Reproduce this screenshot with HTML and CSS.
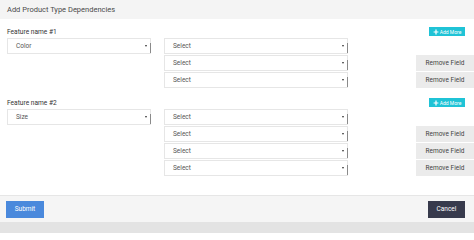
FILE: index.html
```html
<!DOCTYPE html>
<html>
<head>
<meta charset="utf-8">
<link rel="stylesheet" href="styles.css">
</head>
<body>
<div class="page">
  <div class="header">Add Product Type Dependencies</div>
  <div class="content">
    <div class="group">
      <div class="top">
        <span class="label">Feature name #1</span>
        <span class="add"><svg class="plus" viewBox="0 0 10 10"><path d="M4 1h2v3h3v2H6v3H4V6H1V4h3z" fill="#fff"/></svg>Add More</span>
      </div>
      <div class="rows">
        <div class="row">
          <div class="sel feat">Color<i class="arr"></i></div>
          <div class="sel val">Select<i class="arr"></i></div>
          <div class="slot"></div>
        </div>
        <div class="row">
          <div class="blank"></div>
          <div class="sel val">Select<i class="arr"></i></div>
          <div class="slot"><span class="remove">Remove Field</span></div>
        </div>
        <div class="row">
          <div class="blank"></div>
          <div class="sel val">Select<i class="arr"></i></div>
          <div class="slot"><span class="remove">Remove Field</span></div>
        </div>
      </div>
    </div>
    <div class="group">
      <div class="top">
        <span class="label">Feature name #2</span>
        <span class="add"><svg class="plus" viewBox="0 0 10 10"><path d="M4 1h2v3h3v2H6v3H4V6H1V4h3z" fill="#fff"/></svg>Add More</span>
      </div>
      <div class="rows">
        <div class="row">
          <div class="sel feat">Size<i class="arr"></i></div>
          <div class="sel val">Select<i class="arr"></i></div>
          <div class="slot"></div>
        </div>
        <div class="row">
          <div class="blank"></div>
          <div class="sel val">Select<i class="arr"></i></div>
          <div class="slot"><span class="remove">Remove Field</span></div>
        </div>
        <div class="row">
          <div class="blank"></div>
          <div class="sel val">Select<i class="arr"></i></div>
          <div class="slot"><span class="remove">Remove Field</span></div>
        </div>
        <div class="row">
          <div class="blank"></div>
          <div class="sel val">Select<i class="arr"></i></div>
          <div class="slot"><span class="remove">Remove Field</span></div>
        </div>
      </div>
    </div>
  </div>
  <div class="footer">
    <span class="btn submit">Submit</span>
    <span class="btn cancel">Cancel</span>
  </div>
  <div class="strip"></div>
</div>
</body>
</html>
```

FILE: styles.css
```css
* { box-sizing: border-box; }
html, body { margin: 0; padding: 0; background: #fff; }
.page {
  width: 474px;
  height: 233px;
  overflow: hidden;
  font-family: Roboto, "Liberation Sans", sans-serif;
  color: #444;
  display: flex;
  flex-direction: column;
}
.header {
  height: 19px;
  background: #f4f4f4;
  font-size: 7.5px;
  line-height: 19px;
  padding-left: 7px;
  color: #4a4a4a;
}
.content {
  padding: 8px 0 0 7px;
  display: flex;
  flex-direction: column;
  gap: 10px;
  flex: 1;
}
.top {
  height: 9px;
  display: flex;
  align-items: center;
  justify-content: space-between;
  padding-right: 9px;
  margin-bottom: 2px;
}
.label {
  font-size: 6.6px;
  color: #333;
  margin-top: 1px;
}
.add {
  display: flex;
  align-items: center;
  justify-content: center;
  gap: 1px;
  width: 36px;
  height: 9px;
  background: #1fc3d6;
  color: #fff;
  font-size: 5px;
}
.plus { width: 6px; height: 6px; }
.rows {
  display: flex;
  flex-direction: column;
  gap: 1px;
}
.row {
  display: flex;
  height: 16px;
  align-items: stretch;
}
.sel {
  position: relative;
  background: #fff;
  border: 1px solid #e6e6e6;
  font-size: 6.5px;
  color: #555;
  padding-left: 8px;
  display: flex;
  align-items: center;
}
.feat, .blank { width: 144px; }
.val { width: 184px; margin-left: 13px; }
.arr {
  position: absolute;
  right: 3px;
  top: 6px;
  width: 0;
  height: 0;
  border-left: 1.5px solid transparent;
  border-right: 1.5px solid transparent;
  border-top: 2px solid #333;
}
.sel::after {
  content: "";
  position: absolute;
  right: -1px;
  top: 4px;
  bottom: 0;
  width: 1px;
  background: #8a8a8a;
}
.slot {
  flex: 1;
  display: flex;
  justify-content: flex-end;
}
.remove {
  width: 58px;
  background: #ebebeb;
  font-size: 6.5px;
  color: #444;
  display: flex;
  align-items: center;
  justify-content: center;
}
.footer {
  height: 27px;
  background: #f5f5f5;
  border-top: 1px solid #e6e6e6;
  display: flex;
  justify-content: space-between;
  align-items: center;
  padding: 0 9px 0 6px;
}
.btn {
  height: 17px;
  display: flex;
  align-items: center;
  justify-content: center;
  font-size: 6.5px;
  color: #fff;
}
.submit { width: 38px; background: #4a89dc; }
.cancel { width: 37px; background: #373a4c; }
.strip {
  height: 11px;
  background: #e3e3e3;
}
```
